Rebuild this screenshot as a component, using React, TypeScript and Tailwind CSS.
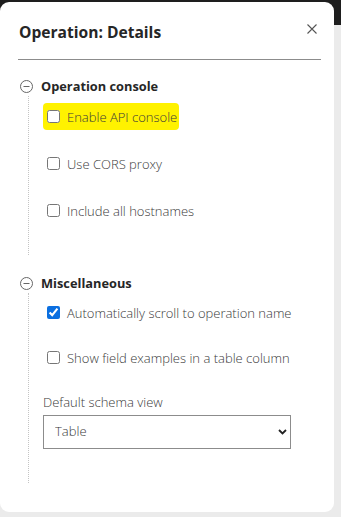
import React from 'react';

const MinusCircle = () => (
  <svg width="13" height="13" viewBox="0 0 13 13" className="shrink-0">
    <circle cx="6.5" cy="6.5" r="6" fill="none" stroke="#666" strokeWidth="1" />
    <line x1="3.5" y1="6.5" x2="9.5" y2="6.5" stroke="#666" strokeWidth="1" />
  </svg>
);

interface OptionProps {
  label: string;
  checked?: boolean;
  highlight?: boolean;
}

const Option: React.FC<OptionProps> = ({ label, checked, highlight }) => (
  <label
    className={`flex items-center gap-[7px] h-[27px] ml-[14px] pl-[4px] pr-[2px] self-start cursor-pointer ${
      highlight ? 'bg-[#fff200] rounded-[4px]' : ''
    }`}
  >
    <input
      type="checkbox"
      defaultChecked={checked}
      className="m-0 w-[13px] h-[13px] accent-[#0b6fe0]"
    />
    <span className="text-[13px] leading-[18px] font-light text-[#3a3a3a]">{label}</span>
  </label>
);

const SectionHeader: React.FC<{ title: string }> = ({ title }) => (
  <div className="flex items-center gap-[8px] h-[20px] pl-[20px]">
    <MinusCircle />
    <span className="text-[12.8px] leading-[20px] font-bold text-[#262626]">{title}</span>
  </div>
);

export default function App() {
  return (
    <div
      className="w-[341px] h-[517px] pt-[2px] bg-[linear-gradient(to_bottom,#1e1e1e_25px,#ebebeb_25px)]"
      style={{ fontFamily: '"Open Sans", "Liberation Sans", sans-serif' }}
    >
      <div className="w-[334px] h-[510px] bg-white rounded-[9px] pt-[19px] flex flex-col">
        {/* Header */}
        <div className="flex items-start justify-between pl-[19px] pr-[17px]">
          <h2 className="text-[15.6px] leading-[22px] font-bold text-[#262626]">Operation: Details</h2>
          <button className="mt-[3px]" aria-label="Close">
            <svg width="10" height="10" viewBox="0 0 10 10">
              <path d="M0.5 0.5 L9.5 9.5 M9.5 0.5 L0.5 9.5" stroke="#555" strokeWidth="1.1" fill="none" />
            </svg>
          </button>
        </div>
        <div className="mt-[16px] ml-[18px] mr-[13px] border-t border-[#8c8c8c]" />

        {/* Operation console */}
        <div className="mt-[16px]">
          <SectionHeader title="Operation console" />
          <div className="ml-[28px] border-l border-dotted border-[#c4c4c4] pt-[7px] pb-[31px] flex flex-col gap-[20px]">
            <Option label="Enable API console" highlight />
            <Option label="Use CORS proxy" />
            <Option label="Include all hostnames" />
          </div>
        </div>

        {/* Miscellaneous */}
        <div className="mt-[18px]">
          <SectionHeader title="Miscellaneous" />
          <div className="ml-[28px] border-l border-dotted border-[#c4c4c4] pt-[6px] pb-[34px] flex flex-col gap-[18px]">
            <Option label="Automatically scroll to operation name" checked />
            <Option label="Show field examples in a table column" />
            <div className="ml-[14px] mt-[4px] flex flex-col gap-[4px]">
              <span className="text-[13px] leading-[18px] font-light text-[#3a3a3a]">Default schema view</span>
              <div className="relative w-[248px]">
                <select
                  defaultValue="table"
                  className="appearance-none w-full h-[34px] border border-[#8c8c8c] bg-white pl-[11px] text-[13px] font-light text-[#3a3a3a] outline-none"
                >
                  <option value="table">Table</option>
                  <option value="tree">Tree</option>
                </select>
                <svg
                  width="9"
                  height="6"
                  viewBox="0 0 9 6"
                  className="absolute right-[4px] top-[14px] pointer-events-none"
                >
                  <path d="M1 1 L4.5 4.5 L8 1" stroke="#222" strokeWidth="1.8" fill="none" />
                </svg>
              </div>
            </div>
          </div>
        </div>
      </div>
    </div>
  );
}
